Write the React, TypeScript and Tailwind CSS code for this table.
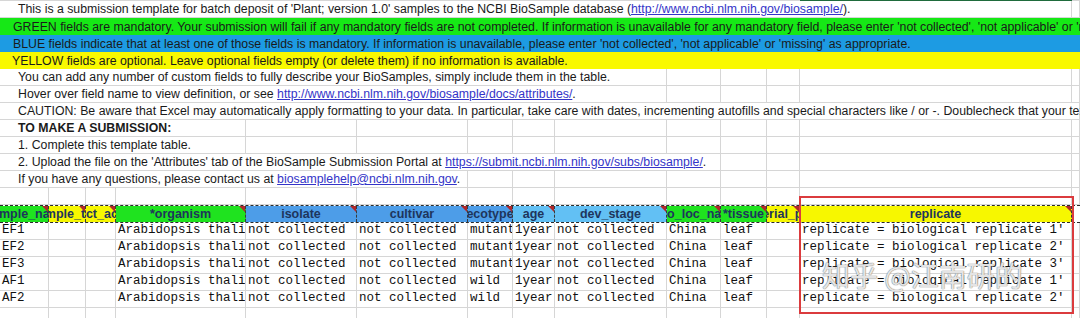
import React from 'react';

const W = [49, 37, 30, 130, 111, 111, 45, 42, 112, 54, 46, 33, 272, 8];
const sum = (from: number, to: number) => W.slice(from, to).reduce((a, b) => a + b, 0);

const SANS = "font-['Liberation_Sans',Arial,sans-serif]";
const MONO = "font-['Liberation_Mono','Courier_New',monospace]";

const Link: React.FC<{ children: React.ReactNode }> = ({ children }) => (
    <span className="text-[#3434c8] underline">{children}</span>
);

interface TextRowProps {
    span: number;
    bg?: string;
    indent?: string;
    bold?: boolean;
    children?: React.ReactNode;
}

const TextRow: React.FC<TextRowProps> = ({ span, bg, indent = 'pl-[18px]', bold, children }) => {
    const colored = !!bg;
    return (
        <div className={`flex h-[17px] ${bg ?? 'bg-white'}`}>
            <div
                style={{ width: sum(0, span) }}
                className={`shrink-0 flex items-end pb-[1px] ${indent} whitespace-nowrap overflow-visible text-[12.3px] leading-[14px] text-[#1a1a1a] ${SANS} ${bold ? 'font-bold' : ''} ${colored ? '' : 'border-b border-r border-[#d6d6d6]'}`}
            >
                <span className="relative z-10">{children}</span>
            </div>
            {W.slice(span).map((w, i) => (
                <div
                    key={i}
                    style={{ width: w }}
                    className={`shrink-0 ${colored ? '' : 'border-b border-r border-[#d6d6d6]'}`}
                />
            ))}
        </div>
    );
};

const headers: { label: string; bg: string }[] = [
    { label: '*sample_name', bg: 'bg-[#1fe31f]' },
    { label: 'sample_title', bg: 'bg-[#f7f700]' },
    { label: 'bioproject_accession', bg: 'bg-[#f7f700]' },
    { label: '*organism', bg: 'bg-[#1fe31f]' },
    { label: 'isolate', bg: 'bg-[#4d9de8]' },
    { label: 'cultivar', bg: 'bg-[#4d9de8]' },
    { label: 'ecotype', bg: 'bg-[#4d9de8]' },
    { label: 'age', bg: 'bg-[#62c0f4]' },
    { label: 'dev_stage', bg: 'bg-[#62c0f4]' },
    { label: '*geo_loc_name', bg: 'bg-[#1fe31f]' },
    { label: '*tissue', bg: 'bg-[#1fe31f]' },
    { label: 'biomaterial_provider', bg: 'bg-[#f7f700]' },
    { label: 'replicate', bg: 'bg-[#f7f700]' },
];

const rows: string[][] = [
    ['EF1', '', '', 'Arabidopsis thaliana', 'not collected', 'not collected', 'mutant', '1year', 'not collected', 'China', 'leaf', '', "replicate = biological replicate 1'"],
    ['EF2', '', '', 'Arabidopsis thaliana', 'not collected', 'not collected', 'mutant', '1year', 'not collected', 'China', 'leaf', '', "replicate = biological replicate 2'"],
    ['EF3', '', '', 'Arabidopsis thaliana', 'not collected', 'not collected', 'mutant', '1year', 'not collected', 'China', 'leaf', '', "replicate = biological replicate 3'"],
    ['AF1', '', '', 'Arabidopsis thaliana', 'not collected', 'not collected', 'wild', '1year', 'not collected', 'China', 'leaf', '', "replicate = biological replicate 1'"],
    ['AF2', '', '', 'Arabidopsis thaliana', 'not collected', 'not collected', 'wild', '1year', 'not collected', 'China', 'leaf', '', "replicate = biological replicate 2'"],
];

const HeaderRow = () => (
    <div className="flex h-[18px] border-y border-dashed border-[#2a2a2a] bg-white">
        {headers.map((h, i) => (
            <div
                key={i}
                style={{ width: W[i] }}
                className={`relative shrink-0 overflow-hidden flex items-center justify-center border-r border-dashed border-[#3a3a3a] ${h.bg}`}
            >
                <span className={`whitespace-nowrap text-[12.5px] font-bold leading-[16px] text-[#1e355c] ${SANS}`}>
                    {h.label}
                </span>
                <span className="absolute right-0 top-0 w-0 h-0 border-t-[6px] border-l-[6px] border-t-[#b0282a] border-l-transparent" />
            </div>
        ))}
        <div style={{ width: W[13] }} className="shrink-0 bg-white" />
    </div>
);

const DataRow: React.FC<{ cells: string[] }> = ({ cells }) => (
    <div className="flex h-[17px] bg-white">
        {W.map((w, i) => (
            <div
                key={i}
                style={{ width: w }}
                className="shrink-0 overflow-hidden flex items-end pb-[1px] pl-[2px] border-b border-r border-[#d6d6d6]"
            >
                <span className={`whitespace-nowrap text-[12.5px] leading-[15px] text-[#111] ${MONO}`}>
                    {cells[i] ?? ''}
                </span>
            </div>
        ))}
    </div>
);

export default function App() {
    return (
        <div className="relative w-[1080px] h-[318px] overflow-hidden bg-white">
            <div className="border-t border-[#d6d6d6]">
                <TextRow span={13}>
                    This is a submission template for batch deposit of 'Plant; version 1.0' samples to the NCBI BioSample database (
                    <Link>http://www.ncbi.nlm.nih.gov/biosample/</Link>).
                </TextRow>
                <TextRow span={14} bg="bg-[#16e816]" indent="pl-[13px]">
                    GREEN fields are mandatory. Your submission will fail if any mandatory fields are not completed. If information is unavailable for any mandatory field, please enter 'not collected', 'not applicable' or 'missing' as appropriate.
                </TextRow>
                <TextRow span={14} bg="bg-[#1d9be3]" indent="pl-[13px]">
                    BLUE fields indicate that at least one of those fields is mandatory. If information is unavailable, please enter 'not collected', 'not applicable' or 'missing' as appropriate.
                </TextRow>
                <TextRow span={14} bg="bg-[#f9f900]" indent="pl-[12px]">
                    YELLOW fields are optional. Leave optional fields empty (or delete them) if no information is available.
                </TextRow>
                <TextRow span={9}>
                    You can add any number of custom fields to fully describe your BioSamples, simply include them in the table.
                </TextRow>
                <TextRow span={9}>
                    Hover over field name to view definition, or see <Link>http://www.ncbi.nlm.nih.gov/biosample/docs/attributes/</Link>.
                </TextRow>
                <TextRow span={14}>
                    CAUTION: Be aware that Excel may automatically apply formatting to your data. In particular, take care with dates, incrementing autofills and special characters like / or -. Doublecheck that your text file is accurate before uploading to BioSample.
                </TextRow>
                <TextRow span={4} bold>
                    TO MAKE A SUBMISSION:
                </TextRow>
                <TextRow span={4}>1. Complete this template table.</TextRow>
                <TextRow span={10}>
                    2. Upload the file on the 'Attributes' tab of the BioSample Submission Portal at{' '}
                    <Link>https://submit.ncbi.nlm.nih.gov/subs/biosample/</Link>.
                </TextRow>
                <TextRow span={6}>
                    If you have any questions, please contact us at <Link>biosamplehelp@ncbi.nlm.nih.gov</Link>.
                </TextRow>
                <TextRow span={1} />
                <HeaderRow />
                {rows.map((r, i) => (
                    <DataRow key={i} cells={r} />
                ))}
                <DataRow cells={[]} />
            </div>

            {/* selected column marker */}
            <div className="absolute left-[800px] top-0 w-[272px] h-[1px] bg-[#1f6b3c]" />

            {/* highlight box */}
            <div className="absolute left-[799px] top-[196px] w-[275px] h-[118px] border-2 border-[#db3b3e]" />

            {/* watermark */}
            <div
                className={`absolute left-[822px] top-[258px] text-[28px] leading-[34px] text-white/80 font-['Noto_Sans_CJK_SC',sans-serif] [text-shadow:0_0_1px_#777,0_0_1px_#777] whitespace-nowrap`}
            >
                知乎 @江南研的
            </div>
        </div>
    );
}
